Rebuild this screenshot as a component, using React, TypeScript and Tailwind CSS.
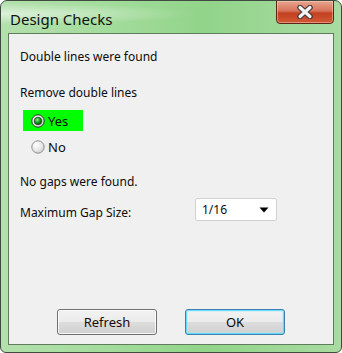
import React from "react";

function Radio({ checked }: { checked?: boolean }) {
  return (
    <svg width="14" height="14" viewBox="0 0 14 14" className="shrink-0">
      <defs>
        <radialGradient id="rbg" cx="0.35" cy="0.3" r="0.8">
          <stop offset="0" stopColor="#ffffff" />
          <stop offset="0.6" stopColor="#e6e6e6" />
          <stop offset="1" stopColor="#c8c8c8" />
        </radialGradient>
        <radialGradient id="dot" cx="0.4" cy="0.35" r="0.7">
          <stop offset="0" stopColor="#8df08d" />
          <stop offset="0.5" stopColor="#1f9a1f" />
          <stop offset="1" stopColor="#054a05" />
        </radialGradient>
      </defs>
      <circle cx="7" cy="7" r="6.2" fill="url(#rbg)" stroke={checked ? "#2f2f2f" : "#8e8f8f"} strokeWidth="1" />
      {checked && <circle cx="7" cy="7" r="3.8" fill="url(#dot)" stroke="#0c3a0c" strokeWidth="0.7" />}
    </svg>
  );
}

function CloseGlyph() {
  return (
    <svg width="22" height="14" viewBox="0 0 22 14">
      <path d="M6 2.5 L16 11.5 M16 2.5 L6 11.5" stroke="#3b3b3b" strokeWidth="5.5" strokeLinecap="round" />
      <path d="M6 2.5 L16 11.5 M16 2.5 L6 11.5" stroke="#f4f4f4" strokeWidth="3.2" strokeLinecap="round" />
    </svg>
  );
}

export default function App() {
  return (
    <div
      className="w-[342px] h-[353px] flex flex-col rounded-t-[7px] rounded-b-[6px] border border-[#404a40] bg-[linear-gradient(90deg,#b3e0ad_0%,#a4dc9d_30%,#92d48a_60%,#a8dba1_100%)] overflow-hidden"
      style={{ fontFamily: '"Noto Sans", "Liberation Sans", sans-serif' }}
    >
      <div className="h-[32px] shrink-0 flex items-start justify-between relative bg-[radial-gradient(ellipse_at_0%_40%,rgba(255,255,255,0.55),rgba(255,255,255,0)_40%)]">
        <span className="text-[15px] text-[#101010] leading-none mt-[11px] ml-[9px]">Design Checks</span>
        <div className="w-[58px] h-[24px] mr-[7px] -mt-px rounded-b-[4px] border border-[#5b2416] bg-[linear-gradient(180deg,#e9a58f_0%,#d7735a_45%,#c2401f_55%,#d25a38_100%)] flex items-center justify-center shadow-[inset_0_0_0_1px_rgba(255,220,200,0.45)]">
          <CloseGlyph />
        </div>
      </div>
      <div className="mx-[7px] mb-[7px] flex-1 border border-[#5f7d5c] bg-[#f0f0f0] flex flex-col text-[12px] text-[#0c0c0c] leading-[16px]">
        <div className="ml-[11px] mt-[15px]">Double lines were found</div>
        <div className="ml-[11px] mt-[20px]">Remove double lines</div>
        <div className="ml-[14px] mt-[9px] w-[60px] h-[21px] bg-[#00ff00] flex items-center gap-[3px] pl-[8px]">
          <Radio checked />
          <span className="text-[13px]">Yes</span>
        </div>
        <div className="ml-[14px] mt-[5px] h-[21px] flex items-center gap-[3px] pl-[8px]">
          <Radio />
          <span className="text-[13px]">No</span>
        </div>
        <div className="ml-[11px] mt-[17px]">No gaps were found.</div>
        <div className="ml-[11px] mt-[8px] flex items-start justify-between w-[257px]">
          <span className="mt-[7px]">Maximum Gap Size:</span>
          <div className="w-[82px] h-[23px] bg-white border border-[#cfd1d3] rounded-[2px] flex items-center justify-between pl-[6px] pr-[7px]">
            <span className="text-[12px]">1/16</span>
            <svg width="10" height="6" viewBox="0 0 10 6">
              <path d="M0.5 0.5 H9.5 L5 5.5 Z" fill="#000" />
            </svg>
          </div>
        </div>
        <div className="mt-auto mb-[9px] flex justify-start gap-[28px] ml-[48px]">
          <button className="w-[100px] h-[26px] rounded-[3px] border border-[#707070] bg-[linear-gradient(180deg,#f2f2f2_0%,#ebebeb_50%,#dddddd_51%,#cfcfcf_100%)] shadow-[inset_0_0_0_1px_rgba(255,255,255,0.8)] text-[13px] text-[#1a0a0a]">
            Refresh
          </button>
          <button className="w-[100px] h-[26px] rounded-[3px] border border-[#3c7fb1] bg-[linear-gradient(180deg,#f2f2f2_0%,#ebebeb_50%,#dddddd_51%,#cfcfcf_100%)] shadow-[inset_0_0_0_1px_rgba(72,216,251,0.75),inset_0_0_0_2px_rgba(160,230,250,0.35)] text-[13px] text-[#0a0a0a]">
            OK
          </button>
        </div>
      </div>
    </div>
  );
}
